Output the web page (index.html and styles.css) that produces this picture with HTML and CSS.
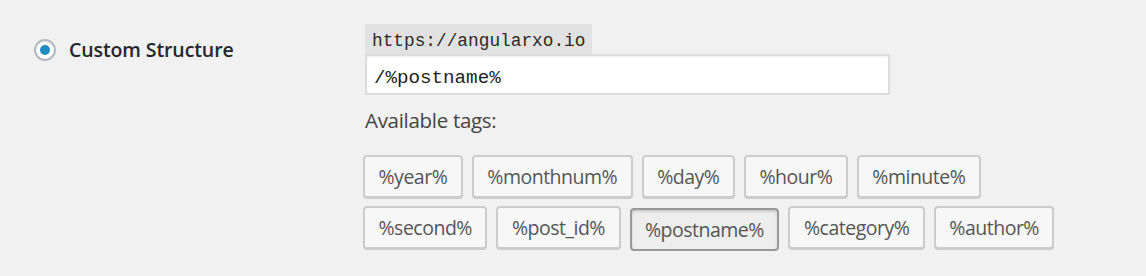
FILE: index.html
```html
<!DOCTYPE html>
<html>
<head>
    <title>Permalink Settings</title>
    <link rel="stylesheet" href="styles.css">
</head>
<body>
    <!-- Custom structure option -->
    <div class="permalink-row">
        <div class="option-label">
            <span class="radio checked"></span>
            <label for="permalink_structure">Custom Structure</label>
        </div>
        <div class="option-field">
            <code class="base-url">https://angularxo.io</code>
            <input type="text" id="permalink_structure" class="structure-input" value="/%postname%">
            <p class="tags-title">Available tags:</p>
            <ul class="tag-list">
                <li><button class="tag-btn">%year%</button></li>
                <li><button class="tag-btn">%monthnum%</button></li>
                <li><button class="tag-btn">%day%</button></li>
                <li><button class="tag-btn">%hour%</button></li>
                <li><button class="tag-btn">%minute%</button></li>
                <li><button class="tag-btn">%second%</button></li>
                <li><button class="tag-btn">%post_id%</button></li>
                <li><button class="tag-btn active">%postname%</button></li>
                <li><button class="tag-btn">%category%</button></li>
                <li><button class="tag-btn">%author%</button></li>
            </ul>
        </div>
    </div>
</body>
</html>
```

FILE: styles.css
```css
* {
    margin: 0;
    padding: 0;
    box-sizing: border-box;
    font-family: 'Open Sans', 'Noto Sans', sans-serif;
}

body {
    background: #f1f1f1;
    color: #444;
    min-height: 100vh;
}

/* Row layout */
.permalink-row {
    display: flex;
    padding: 24px 0 0 34px;
}

.option-label {
    width: 331px;
    height: 30px;
    margin-top: 11px;
    display: flex;
    align-items: center;
    gap: 13px;
}

.option-label label {
    color: #23282d;
    font-size: 19.5px;
    font-weight: 600;
    letter-spacing: -0.1px;
    line-height: 30px;
}

/* Radio button */
.radio {
    width: 22px;
    height: 22px;
    border: 2px solid #b4b9be;
    border-radius: 50%;
    background: #fff;
    box-shadow: inset 0 1px 2px rgba(0, 0, 0, 0.1);
    display: flex;
    justify-content: center;
    align-items: center;
}

.radio.checked::before {
    content: '';
    width: 10px;
    height: 10px;
    border-radius: 50%;
    background: #1e8cbe;
}

/* Structure field */
.option-field {
    width: 740px;
}

.base-url {
    display: inline-block;
    height: 30px;
    padding: 5px 7px 0;
    line-height: 25px;
    background: #e2e2e2;
    color: #2a2a2a;
    font-family: 'Liberation Mono', monospace;
    font-size: 17.8px;
}

.structure-input {
    display: block;
    width: 525px;
    height: 41px;
    padding: 6px 7px 0;
    border: 2px solid #ddd;
    background: #fff;
    box-shadow: inset 0 1px 2px rgba(0, 0, 0, 0.07);
    color: #1e1e1e;
    font-family: 'Liberation Mono', monospace;
    font-size: 19.2px;
    outline: none;
}

.tags-title {
    margin-top: 13px;
    font-size: 20.5px;
    letter-spacing: -0.3px;
    line-height: 24px;
    color: #444;
}

/* Tag buttons */
.tag-list {
    list-style: none;
    display: flex;
    flex-wrap: wrap;
    gap: 8px 9px;
    max-width: 720px;
    margin: 23px 0 0 -2px;
}

.tag-btn {
    height: 43px;
    padding: 0 13.5px;
    border: 2px solid #ccc;
    border-radius: 4px;
    background: #f7f7f7;
    box-shadow: 0 1px 0 #ccc;
    color: #555;
    font-size: 19.5px;
    letter-spacing: -0.5px;
    cursor: pointer;
}

.tag-btn.active {
    background: #eee;
    border-color: #999;
    box-shadow: inset 0 2px 5px -3px rgba(0, 0, 0, 0.5);
    transform: translateY(2px);
}
```
